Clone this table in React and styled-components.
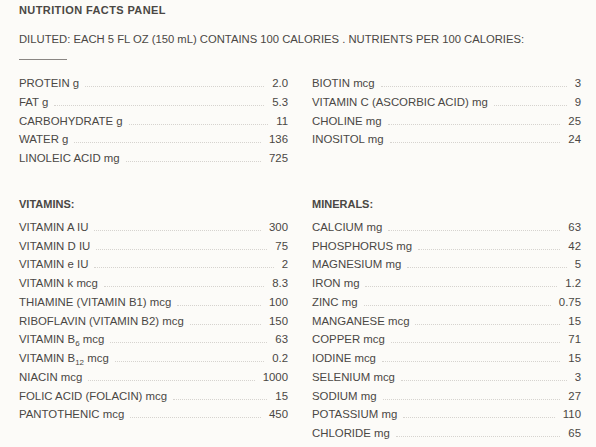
import React from 'react';
import styled, {createGlobalStyle} from 'styled-components';

const GlobalStyle = createGlobalStyle`
    html, body {
        margin: 0;
        padding: 0;
        background: #FCFBF8;
    }
`;

const Page = styled.div`
    padding: 4px 15px 0 19px;
    font-family: "Liberation Sans", Arial, sans-serif;
    color: #4a4744;
    font-size: 11.4px;
`;

const Title = styled.div`
    font-weight: bold;
    font-size: 11px;
    line-height: 13px;
    letter-spacing: 0.4px;
`;

const Intro = styled.div`
    margin-top: 16px;
    font-size: 11.25px;
    line-height: 13px;
`;

const ShortRule = styled.div`
    width: 48px;
    height: 1px;
    background: #8a8683;
    margin-top: 13px;
`;

const Columns = styled.div`
    display: grid;
    grid-template-columns: 269px 269px;
    column-gap: 24px;
    margin-top: ${(props) => props.top}px;
`;

const Column = styled.div`
    display: flex;
    flex-direction: column;
`;

const Heading = styled.div`
    font-weight: bold;
    font-size: 11px;
    height: 19.5px;
    line-height: 13px;
`;

const Row = styled.div`
    display: flex;
    align-items: baseline;
    height: 18.75px;
    line-height: 18.75px;
`;

const Label = styled.span`
    white-space: nowrap;

    sub {
        font-size: 8px;
        line-height: 0;
        vertical-align: -2.5px;
    }
`;

const Leader = styled.span`
    flex: 1;
    margin: 0 8px 0 6px;
    border-bottom: 1px dotted #d6d3cf;
`;

const Value = styled.span`
    white-space: nowrap;
`;

const general = [
    ['PROTEIN g', '2.0'],
    ['FAT g', '5.3'],
    ['CARBOHYDRATE g', '11'],
    ['WATER g', '136'],
    ['LINOLEIC ACID mg', '725'],
];

const generalRight = [
    ['BIOTIN mcg', '3'],
    ['VITAMIN C (ASCORBIC ACID) mg', '9'],
    ['CHOLINE mg', '25'],
    ['INOSITOL mg', '24'],
];

const vitamins = [
    ['VITAMIN A IU', '300'],
    ['VITAMIN D IU', '75'],
    ['VITAMIN e IU', '2'],
    ['VITAMIN k mcg', '8.3'],
    ['THIAMINE (VITAMIN B1) mcg', '100'],
    ['RIBOFLAVIN (VITAMIN B2) mcg', '150'],
    [<>VITAMIN B<sub>6</sub> mcg</>, '63'],
    [<>VITAMIN B<sub>12</sub> mcg</>, '0.2'],
    ['NIACIN mcg', '1000'],
    ['FOLIC ACID (FOLACIN) mcg', '15'],
    ['PANTOTHENIC mcg', '450'],
];

const minerals = [
    ['CALCIUM mg', '63'],
    ['PHOSPHORUS mg', '42'],
    ['MAGNESIUM mg', '5'],
    ['IRON mg', '1.2'],
    ['ZINC mg', '0.75'],
    ['MANGANESE mcg', '15'],
    ['COPPER mcg', '71'],
    ['IODINE mcg', '15'],
    ['SELENIUM mcg', '3'],
    ['SODIUM mg', '27'],
    ['POTASSIUM mg', '110'],
    ['CHLORIDE mg', '65'],
];

function NutrientList({items}) {
    return items.map(([label, value], i) => (
        <Row key={i}>
            <Label>{label}</Label>
            <Leader/>
            <Value>{value}</Value>
        </Row>
    ));
}

function App() {
    return (
        <Page>
            <GlobalStyle/>
            <Title>NUTRITION FACTS PANEL</Title>
            <Intro>DILUTED: EACH 5 FL OZ (150 mL) CONTAINS 100 CALORIES . NUTRIENTS PER 100 CALORIES:</Intro>
            <ShortRule/>
            <Columns top={14}>
                <Column>
                    <NutrientList items={general}/>
                </Column>
                <Column>
                    <NutrientList items={generalRight}/>
                </Column>
            </Columns>
            <Columns top={30.5}>
                <Column>
                    <Heading>VITAMINS:</Heading>
                    <NutrientList items={vitamins}/>
                </Column>
                <Column>
                    <Heading>MINERALS:</Heading>
                    <NutrientList items={minerals}/>
                </Column>
            </Columns>
        </Page>
    );
}

export default App;
